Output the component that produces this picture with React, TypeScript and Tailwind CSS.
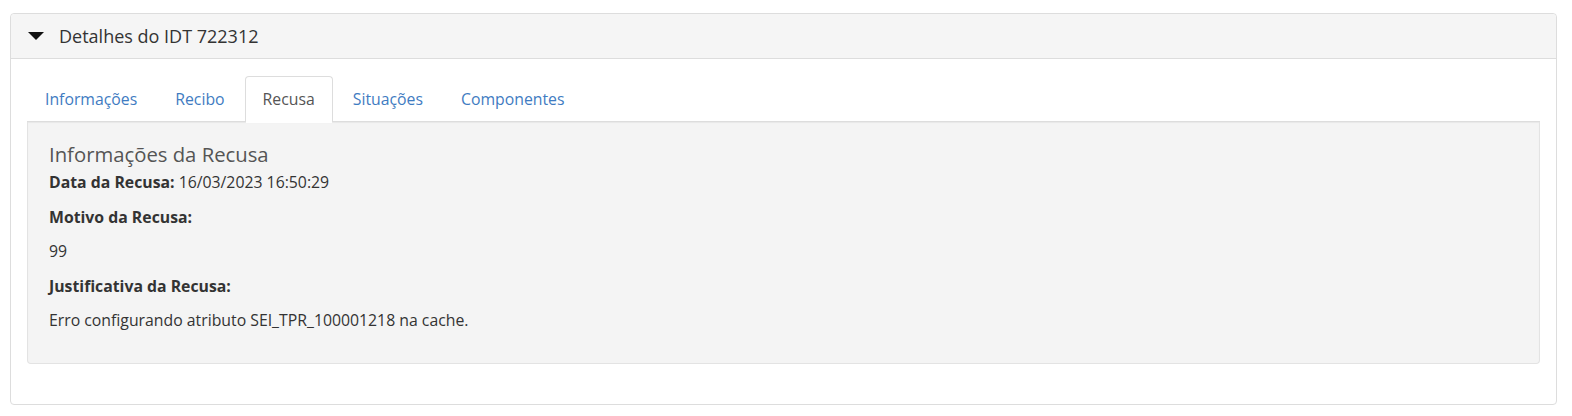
import React from "react";

const tabs = ["Informações", "Recibo", "Recusa", "Situações", "Componentes"];

export default function App() {
  return (
    <div
      className="w-[1572px] h-[416px] bg-white pt-[13px] pl-[10px] pr-[15px] text-[#333]"
      style={{ fontFamily: '"Open Sans", "Noto Sans", sans-serif' }}
    >
      <div className="border border-[#dddddd] rounded-[4px] bg-white">
        <div className="h-[45px] bg-[#f5f5f5] border-b border-[#dddddd] rounded-t-[4px] flex items-center pl-[17px]">
          <svg width="16" height="8" viewBox="0 0 16 8" className="mr-[15px]">
            <polygon points="0,0 16,0 8,8" fill="#111" />
          </svg>
          <span className="text-[18px] leading-[22px] text-[#333]">Detalhes do IDT 722312</span>
        </div>
        <div className="px-[16px] pt-[17px] pb-[40px]">
          <div className="flex border-b border-[#dddddd] h-[46px]">
            {tabs.map((t) => {
              const active = t === "Recusa";
              return (
                <div
                  key={t}
                  className={
                    active
                      ? "mr-[2px] px-[17px] h-[47px] pt-[11px] border border-[#dddddd] border-b-white rounded-t-[4px] bg-white text-[15.8px] leading-[22px] text-[#555]"
                      : "mr-[2px] px-[18px] pt-[12px] text-[15.8px] leading-[22px] text-[#3f7cc2]"
                  }
                >
                  {t}
                </div>
              );
            })}
          </div>
          <div className="bg-[#f4f4f4] border border-t-0 border-[#e3e3e3] rounded-b-[4px] shadow-[inset_0_1px_1px_rgba(0,0,0,0.05)] px-[21px] pt-[21px] pb-[31px] text-[15.8px]">
            <h4 className="text-[20.3px] leading-[22px] text-[#555] mb-[6px]">Informações da Recusa</h4>
            <p className="leading-[23px] mb-[11.5px]">
              <b className="font-bold">Data da Recusa:</b> 16/03/2023 16:50:29
            </p>
            <p className="leading-[23px] mb-[11.5px] font-bold">Motivo da Recusa:</p>
            <p className="leading-[23px] mb-[11.5px]">99</p>
            <p className="leading-[23px] mb-[11.5px] font-bold">Justificativa da Recusa:</p>
            <p className="leading-[23px]">Erro configurando atributo SEI_TPR_100001218 na cache.</p>
          </div>
        </div>
      </div>
    </div>
  );
}
